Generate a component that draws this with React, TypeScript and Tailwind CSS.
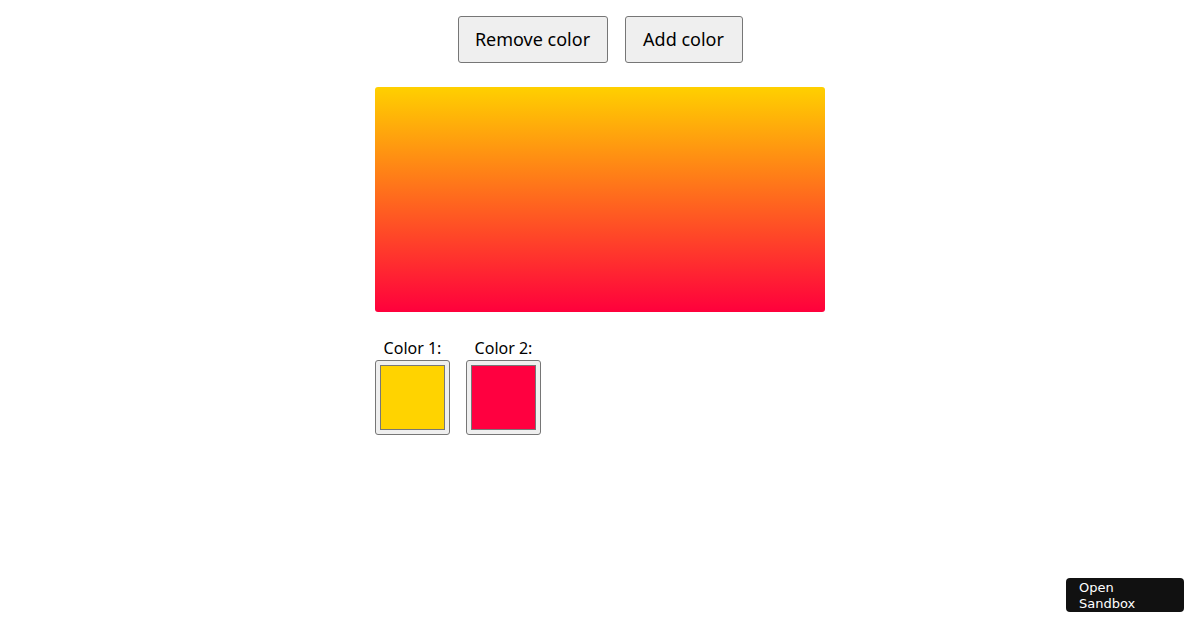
import * as React from 'react';

const colors = [
  { label: 'Color 1:', value: '#ffd300' },
  { label: 'Color 2:', value: '#ff0040' },
];

export default function App() {
  return (
    <div className="relative h-[630px] w-[1200px] bg-white font-['Noto_Sans','DejaVu_Sans',sans-serif] text-black">
      <div className="flex flex-col items-center pt-4">
        <div className="flex gap-[17px]">
          <button className="h-[47px] w-[150px] rounded-[3px] border border-[#767676] bg-[#efefef] text-[18px]">
            Remove color
          </button>
          <button className="h-[47px] w-[118px] rounded-[3px] border border-[#767676] bg-[#efefef] text-[18px]">
            Add color
          </button>
        </div>

        <div className="mt-6 h-[225px] w-[450px] rounded-[3px] bg-[linear-gradient(to_bottom,#ffd000,#ff003c)]" />

        <div className="mt-[26px] flex w-[450px] gap-[16px]">
          {colors.map((c) => (
            <div key={c.label} className="flex w-[75px] flex-col items-center">
              <span className="text-[16px] leading-[21px]">{c.label}</span>
              <div className="mt-[1px] h-[75px] w-[75px] rounded-[3px] border border-[#767676] bg-[#efefef] p-[4px]">
                <div className="h-full w-full border border-[#777]" style={{ backgroundColor: c.value }} />
              </div>
            </div>
          ))}
        </div>
      </div>

      <div className="absolute left-[1066px] top-[578px] flex h-[34px] w-[118px] items-center rounded-[4px] bg-[#111] pl-[13px] pt-[1px] font-['DejaVu_Sans',sans-serif] text-[13px] leading-[16px] text-white">
        <span className="w-[60px]">Open Sandbox</span>
      </div>
    </div>
  );
}
